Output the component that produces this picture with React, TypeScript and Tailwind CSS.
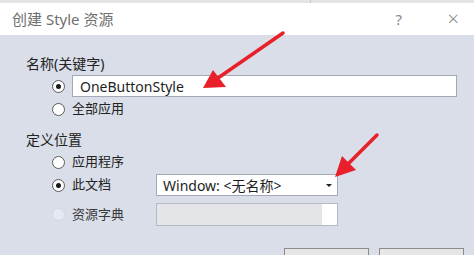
const cjk = { fontFamily: '"Noto Sans", "Noto Sans CJK SC", sans-serif' };

function Radio({ checked, disabled }: { checked?: boolean; disabled?: boolean }) {
  return (
    <div
      className={`w-[13px] h-[13px] rounded-full border flex items-center justify-center shrink-0 ${
        disabled ? "border-[#d3d7df] bg-[#e6e9ef]" : "border-[#5a5a5a] bg-white"
      }`}
    >
      {checked && <div className="w-[5px] h-[5px] rounded-full bg-[#1a1a1a]" />}
    </div>
  );
}

export default function App() {
  return (
    <div className="w-[474px] h-[255px] overflow-hidden flex flex-col relative" style={cjk}>
      <div className="h-[3px] shrink-0 bg-[#e4e4e4] flex">
        <div className="w-[311px] border-r border-[#c8c8c8]" />
      </div>
      <div className="h-[32px] shrink-0 bg-white flex items-center pl-[12px]">
        <span className="text-[15px] text-[#6f6f6f] flex-1">创建 Style 资源</span>
        <span className="text-[15px] text-[#8a8a8a] w-[10px] mr-[42px]">?</span>
        <span className="text-[20px] text-[#8a8a8a] font-light leading-none mr-[15px]">×</span>
      </div>
      <div className="flex-1 min-h-0 overflow-hidden bg-[#d9dee9] pl-[26px] pt-[20px] text-[#222]">
        <div className="h-[18px] leading-[18px] text-[14px]">名称(关键字)</div>
        <div className="mt-[2px] ml-[26px] flex items-center gap-[7px]">
          <Radio checked />
          <div className="w-[385px] h-[22px] bg-white border border-[#a3a9b6] flex items-center pl-[7px] text-[14px] text-[#1e1e1e]">
            OneButtonStyle
          </div>
        </div>
        <div className="mt-[3px] ml-[26px] h-[18px] flex items-center gap-[7px]">
          <Radio />
          <span className="text-[13px]">全部应用</span>
        </div>
        <div className="mt-[13px] h-[18px] leading-[18px] text-[14px]">定义位置</div>
        <div className="mt-[4px] ml-[26px] h-[18px] flex items-center gap-[7px]">
          <Radio />
          <span className="text-[13px]">应用程序</span>
        </div>
        <div className="mt-[3px] ml-[26px] h-[22px] flex items-center">
          <Radio checked />
          <span className="text-[13px] ml-[7px] w-[84px]">此文档</span>
          <div className="w-[182px] h-[22px] bg-white border border-[#a3a9b6] flex items-center pl-[6px] pr-[5px] text-[14px] text-[#1e1e1e]">
            <span className="flex-1">Window: &lt;无名称&gt;</span>
            <span className="w-0 h-0 border-l-[3px] border-r-[3px] border-t-[3px] border-l-transparent border-r-transparent border-t-[#222]" />
          </div>
        </div>
        <div className="mt-[7px] ml-[26px] h-[23px] flex items-center">
          <Radio disabled />
          <span className="text-[13px] ml-[7px] w-[84px] text-[#3a3a3a]">资源字典</span>
          <div className="w-[182px] h-[23px] bg-[#e3e5e9] border border-[#b4b9c3] flex justify-end">
            <div className="w-[15px] bg-white" />
          </div>
        </div>
        <div className="mt-[22px] flex justify-end pr-[10px] gap-[10px]">
          <div className="w-[85px] h-[26px] border border-[#8c8c8c] bg-[#e6e6e6]" />
          <div className="w-[85px] h-[26px] border border-[#8c8c8c] bg-[#e6e6e6]" />
        </div>
      </div>
      <svg className="absolute inset-0 pointer-events-none" width="474" height="255">
        <line x1="283" y1="33" x2="218" y2="78" stroke="#e8202a" strokeWidth="3.5" strokeLinecap="round" />
        <polygon points="203,88 213,70 226,87" fill="#e8202a" />
        <line x1="377" y1="135" x2="348" y2="164" stroke="#e8202a" strokeWidth="3.5" strokeLinecap="round" />
        <polygon points="335,177 342,156 356,170" fill="#e8202a" />
      </svg>
    </div>
  );
}
